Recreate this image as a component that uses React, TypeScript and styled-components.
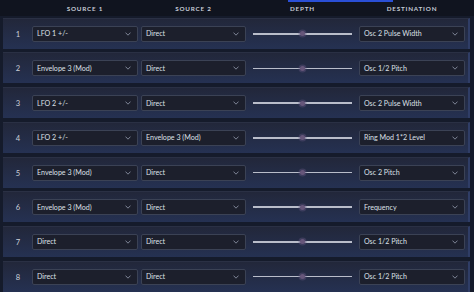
import React from "react";
import styled, { createGlobalStyle } from "styled-components";

const Global = createGlobalStyle`
  html, body { margin: 0; padding: 0; background: #141a2a; }
  body { font-family: Lato, "Open Sans", sans-serif; }
`;

const Page = styled.div`
  width: 474px;
  height: 292px;
  overflow: hidden;
  background: #151b2b;
  position: relative;
`;

const cols = "26px 106px 105px 107px 106px";

const Header = styled.div`
  display: grid;
  grid-template-columns: ${cols};
  column-gap: 3px;
  height: 16px;
  padding-left: 3px;
  align-items: center;
  background: #10141f;
  margin-bottom: 1.8px;
`;

const HeadLabel = styled.div`
  height: 100%;
  display: flex;
  align-items: center;
  justify-content: center;
  font-size: 6.3px;
  font-weight: 700;
  letter-spacing: 0.8px;
  color: #c6cbd6;
`;

const ActiveBar = styled.div`
  position: absolute;
  top: 0;
  left: 288px;
  width: 105px;
  height: 2px;
  background: #2a4fd6;
`;

const List = styled.div`
  display: flex;
  flex-direction: column;
  gap: 3.7px;
  margin-left: 3px;
  width: 467px;
`;

const Row = styled.div`
  display: grid;
  grid-template-columns: ${cols};
  column-gap: 3px;
  align-items: center;
  height: 31px;
  flex: none;
  padding-right: 5px;
  box-sizing: border-box;
  background: linear-gradient(180deg, #22273a 0%, #253152 100%);
  border-right: 2px solid #2f3d66;
  border-top: 1px solid #2a3044;
`;

const Num = styled.div`
  text-align: center;
  font-size: 7.6px;
  color: #cdd1db;
  padding-left: 4px;
`;

const Select = styled.div`
  height: 16px;
  box-sizing: border-box;
  border: 1px solid #3b4255;
  border-radius: 2px;
  background: #1c1f2c;
  display: flex;
  align-items: center;
  justify-content: space-between;
  padding: 0 6px 0 4px;
  font-size: 7.1px;
  color: #dde0e8;
  white-space: nowrap;
`;

const Chevron = () => (
  <svg width="6" height="4" viewBox="0 0 6 4">
    <polyline points="0.5,0.6 3,3.2 5.5,0.6" fill="none" stroke="#7e8496" strokeWidth="1" />
  </svg>
);

const SliderCell = styled.div`
  padding: 0 4px;
  display: flex;
  align-items: center;
  height: 100%;
`;

const Track = styled.div`
  position: relative;
  flex: 1;
  height: 1.6px;
  background: #b9bdca;
`;

const Thumb = styled.div`
  position: absolute;
  top: 50%;
  left: 50%;
  width: 5px;
  height: 5px;
  margin: -2.5px 0 0 -2.5px;
  border-radius: 50%;
  background: #66567a;
  box-shadow: 0 0 0 1.5px rgba(90, 80, 120, 0.45);
`;

const rows = [
  ["LFO 1 +/-", "Direct", "Osc 2 Pulse Width"],
  ["Envelope 3 (Mod)", "Direct", "Osc 1/2 Pitch"],
  ["LFO 2 +/-", "Direct", "Osc 2 Pulse Width"],
  ["LFO 2 +/-", "Envelope 3 (Mod)", "Ring Mod 1*2 Level"],
  ["Envelope 3 (Mod)", "Direct", "Osc 2 Pitch"],
  ["Envelope 3 (Mod)", "Direct", "Frequency"],
  ["Direct", "Direct", "Osc 1/2 Pitch"],
  ["Direct", "Direct", "Osc 1/2 Pitch"],
];

export default function App() {
  return (
    <Page>
      <Global />
      <ActiveBar />
      <Header>
        <HeadLabel />
        <HeadLabel>SOURCE 1</HeadLabel>
        <HeadLabel>SOURCE 2</HeadLabel>
        <HeadLabel>DEPTH</HeadLabel>
        <HeadLabel>DESTINATION</HeadLabel>
      </Header>
      <List>
        {rows.map((r, i) => (
          <Row key={i}>
            <Num>{i + 1}</Num>
            <Select>
              <span>{r[0]}</span>
              <Chevron />
            </Select>
            <Select>
              <span>{r[1]}</span>
              <Chevron />
            </Select>
            <SliderCell>
              <Track>
                <Thumb />
              </Track>
            </SliderCell>
            <Select>
              <span>{r[2]}</span>
              <Chevron />
            </Select>
          </Row>
        ))}
      </List>
    </Page>
  );
}
